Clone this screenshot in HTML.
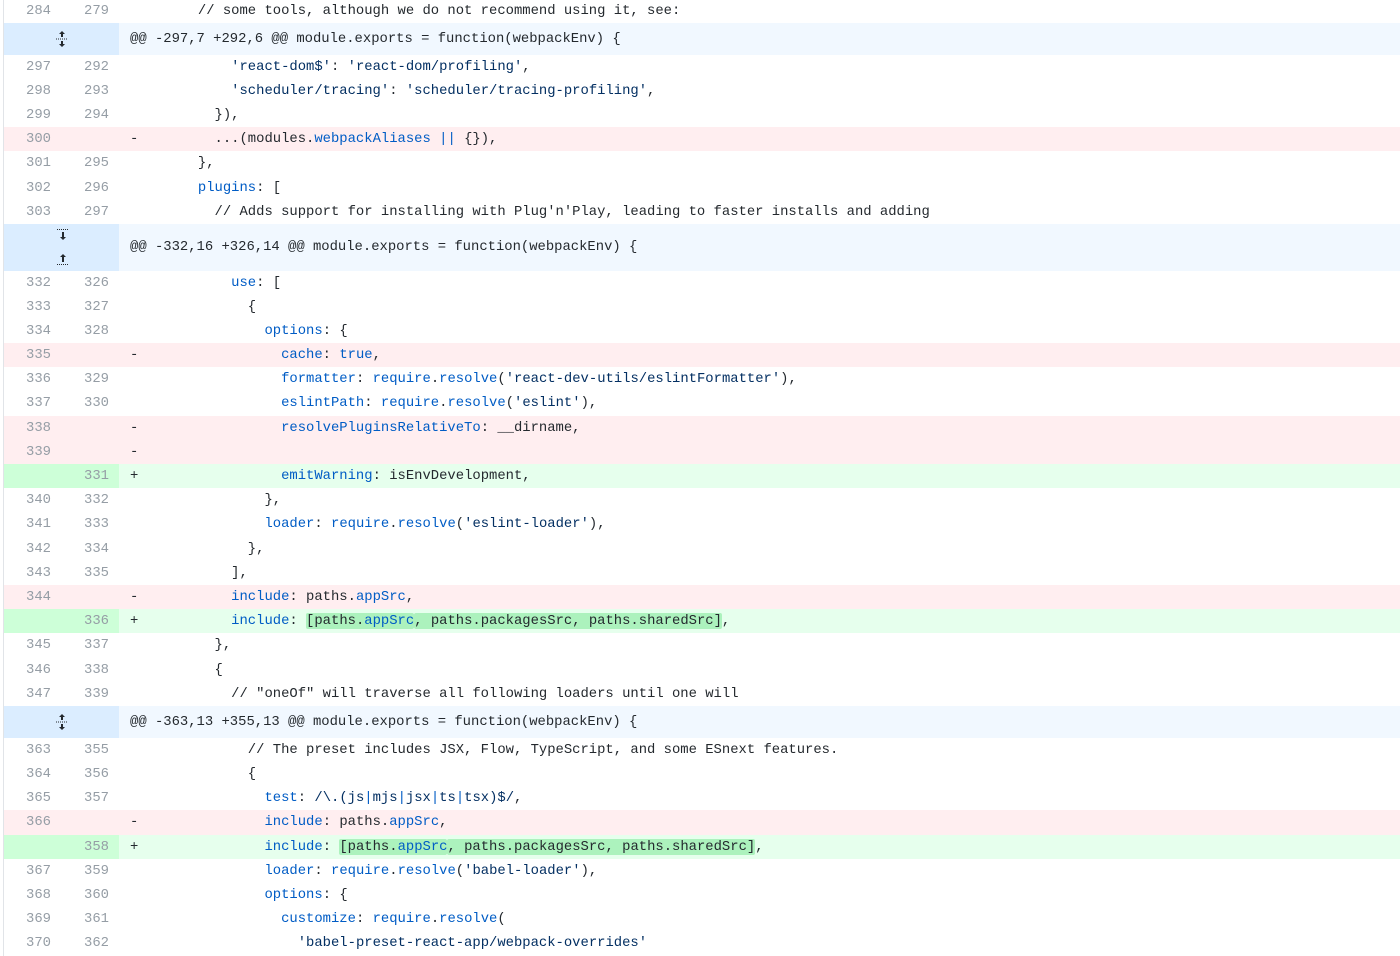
<!DOCTYPE html>
<html><head><meta charset="utf-8"><style>
html,body{margin:0;padding:0;background:#fff;width:1400px;height:951px;overflow:hidden}
#w{position:absolute;left:3px;top:-1.5px;width:1397px;border-left:1px solid #e1e4e8;font-family:"Liberation Mono",monospace;font-size:13.87px;color:#24292e}
.r{position:relative;height:24.2px;line-height:24.2px;white-space:pre}
.n1,.n2{position:absolute;top:0;height:100%;text-align:right;color:#959da5;box-sizing:border-box}
.n1{left:0;width:56px;padding-right:9px}
.n2{left:56px;width:59px;padding-right:10px}
.m{position:absolute;left:126px;top:0}
.c{position:absolute;left:144px;top:0}
.d{background:#ffeef0}
.a{background:#e6ffed}
.a .n1,.a .n2{background:#cdffd8}
.h{background:#f1f8ff;position:relative}
.h .ic{position:absolute;left:0;top:0;width:115px;height:100%;background:#dbedff}
.h .t{position:absolute;left:126px;top:0;line-height:inherit;white-space:pre;color:#24292e}
.b{color:#005cc5}.s{color:#032f62}
.x{background:#acf2bd;border-radius:2px}
svg{position:absolute}
</style></head><body><div id="w">
<div class="r"><span class="n1">284</span><span class="n2">279</span><span class="c">      // some tools, although we do not recommend using it, see:</span></div>
<div class="h" style="height:32px;line-height:32px"><div class="ic"><svg style="left:50px;top:7px" width="16" height="18" viewBox="0 0 16 18"><path d="M8 1 L5 4 H7 V7 H9 V4 H11 Z M8 17 L5 14 H7 V11 H9 V14 H11 Z" fill="#24292e"/><path d="M2 9 H14" stroke="#24292e" stroke-width="1" stroke-dasharray="1 1"/></svg></div><span class="t">@@ -297,7 +292,6 @@ module.exports = function(webpackEnv) {</span></div>
<div class="r"><span class="n1">297</span><span class="n2">292</span><span class="c">          <span class="s">'react-dom$'</span>: <span class="s">'react-dom/profiling'</span>,</span></div>
<div class="r"><span class="n1">298</span><span class="n2">293</span><span class="c">          <span class="s">'scheduler/tracing'</span>: <span class="s">'scheduler/tracing-profiling'</span>,</span></div>
<div class="r"><span class="n1">299</span><span class="n2">294</span><span class="c">        }),</span></div>
<div class="r d"><span class="n1">300</span><span class="n2"></span><span class="m">-</span><span class="c">        ...(modules.<span class="b">webpackAliases</span> <span class="b">||</span> {}),</span></div>
<div class="r"><span class="n1">301</span><span class="n2">295</span><span class="c">      },</span></div>
<div class="r"><span class="n1">302</span><span class="n2">296</span><span class="c">      <span class="b">plugins</span>: [</span></div>
<div class="r"><span class="n1">303</span><span class="n2">297</span><span class="c">        // Adds support for installing with Plug'n'Play, leading to faster installs and adding</span></div>
<div class="h" style="height:46.5px;line-height:46.5px"><div class="ic"><svg style="left:52px;top:4px" width="14" height="38" viewBox="0 0 14 38"><path d="M1 1.5 H13 M1 36.5 H13" stroke="#24292e" stroke-width="1" stroke-dasharray="1 1"/><path d="M7 12 L4 9 H6 V4 H8 V9 H10 Z M7 26 L4 29 H6 V34 H8 V29 H10 Z" fill="#24292e"/></svg></div><span class="t">@@ -332,16 +326,14 @@ module.exports = function(webpackEnv) {</span></div>
<div class="r"><span class="n1">332</span><span class="n2">326</span><span class="c">          <span class="b">use</span>: [</span></div>
<div class="r"><span class="n1">333</span><span class="n2">327</span><span class="c">            {</span></div>
<div class="r"><span class="n1">334</span><span class="n2">328</span><span class="c">              <span class="b">options</span>: {</span></div>
<div class="r d"><span class="n1">335</span><span class="n2"></span><span class="m">-</span><span class="c">                <span class="b">cache</span>: <span class="b">true</span>,</span></div>
<div class="r"><span class="n1">336</span><span class="n2">329</span><span class="c">                <span class="b">formatter</span>: <span class="b">require</span>.<span class="b">resolve</span>(<span class="s">'react-dev-utils/eslintFormatter'</span>),</span></div>
<div class="r"><span class="n1">337</span><span class="n2">330</span><span class="c">                <span class="b">eslintPath</span>: <span class="b">require</span>.<span class="b">resolve</span>(<span class="s">'eslint'</span>),</span></div>
<div class="r d"><span class="n1">338</span><span class="n2"></span><span class="m">-</span><span class="c">                <span class="b">resolvePluginsRelativeTo</span>: __dirname,</span></div>
<div class="r d"><span class="n1">339</span><span class="n2"></span><span class="m">-</span><span class="c"></span></div>
<div class="r a"><span class="n1"></span><span class="n2">331</span><span class="m">+</span><span class="c">                <span class="b">emitWarning</span>: isEnvDevelopment,</span></div>
<div class="r"><span class="n1">340</span><span class="n2">332</span><span class="c">              },</span></div>
<div class="r"><span class="n1">341</span><span class="n2">333</span><span class="c">              <span class="b">loader</span>: <span class="b">require</span>.<span class="b">resolve</span>(<span class="s">'eslint-loader'</span>),</span></div>
<div class="r"><span class="n1">342</span><span class="n2">334</span><span class="c">            },</span></div>
<div class="r"><span class="n1">343</span><span class="n2">335</span><span class="c">          ],</span></div>
<div class="r d"><span class="n1">344</span><span class="n2"></span><span class="m">-</span><span class="c">          <span class="b">include</span>: paths.<span class="b">appSrc</span>,</span></div>
<div class="r a"><span class="n1"></span><span class="n2">336</span><span class="m">+</span><span class="c">          <span class="b">include</span>: <span class="x">[paths.<span class="b">appSrc</span></span><span class="x">, paths.packagesSrc, paths.sharedSrc]</span>,</span></div>
<div class="r"><span class="n1">345</span><span class="n2">337</span><span class="c">        },</span></div>
<div class="r"><span class="n1">346</span><span class="n2">338</span><span class="c">        {</span></div>
<div class="r"><span class="n1">347</span><span class="n2">339</span><span class="c">          // "oneOf" will traverse all following loaders until one will</span></div>
<div class="h" style="height:32px;line-height:32px"><div class="ic"><svg style="left:50px;top:7px" width="16" height="18" viewBox="0 0 16 18"><path d="M8 1 L5 4 H7 V7 H9 V4 H11 Z M8 17 L5 14 H7 V11 H9 V14 H11 Z" fill="#24292e"/><path d="M2 9 H14" stroke="#24292e" stroke-width="1" stroke-dasharray="1 1"/></svg></div><span class="t">@@ -363,13 +355,13 @@ module.exports = function(webpackEnv) {</span></div>
<div class="r"><span class="n1">363</span><span class="n2">355</span><span class="c">            // The preset includes JSX, Flow, TypeScript, and some ESnext features.</span></div>
<div class="r"><span class="n1">364</span><span class="n2">356</span><span class="c">            {</span></div>
<div class="r"><span class="n1">365</span><span class="n2">357</span><span class="c">              <span class="b">test</span>: <span class="s">/\.(js<span class="b">|</span>mjs<span class="b">|</span>jsx<span class="b">|</span>ts<span class="b">|</span>tsx)$/</span>,</span></div>
<div class="r d"><span class="n1">366</span><span class="n2"></span><span class="m">-</span><span class="c">              <span class="b">include</span>: paths.<span class="b">appSrc</span>,</span></div>
<div class="r a"><span class="n1"></span><span class="n2">358</span><span class="m">+</span><span class="c">              <span class="b">include</span>: <span class="x">[paths.<span class="b">appSrc</span></span><span class="x">, paths.packagesSrc, paths.sharedSrc]</span>,</span></div>
<div class="r"><span class="n1">367</span><span class="n2">359</span><span class="c">              <span class="b">loader</span>: <span class="b">require</span>.<span class="b">resolve</span>(<span class="s">'babel-loader'</span>),</span></div>
<div class="r"><span class="n1">368</span><span class="n2">360</span><span class="c">              <span class="b">options</span>: {</span></div>
<div class="r"><span class="n1">369</span><span class="n2">361</span><span class="c">                <span class="b">customize</span>: <span class="b">require</span>.<span class="b">resolve</span>(</span></div>
<div class="r"><span class="n1">370</span><span class="n2">362</span><span class="c">                  <span class="s">'babel-preset-react-app/webpack-overrides'</span></span></div>
</div></body></html>
